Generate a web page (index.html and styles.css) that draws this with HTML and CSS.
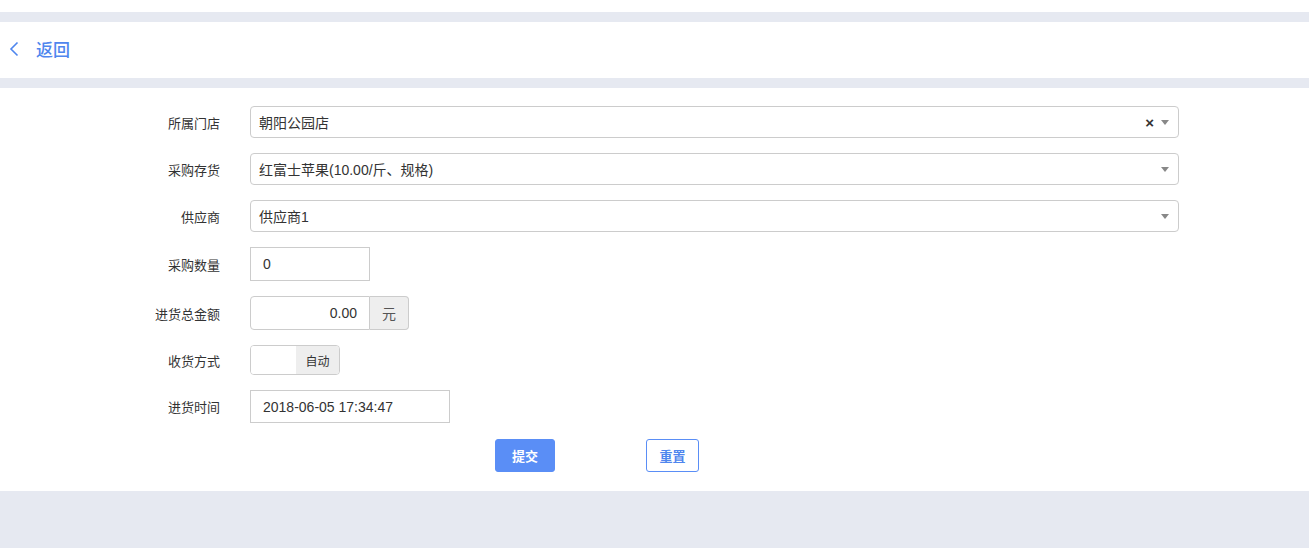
FILE: index.html
```html
<!DOCTYPE html>
<html lang="zh-CN">
<head>
<meta charset="utf-8">
<title>采购</title>
<link rel="stylesheet" href="styles.css">
</head>
<body>
<div class="top-gap"></div>
<div class="band"></div>
<header class="header">
  <a class="back">
    <svg class="chev" width="10" height="16" viewBox="0 0 10 16"><path d="M8.5 1.5 L2 8 L8.5 14.5" fill="none" stroke="#4f86ee" stroke-width="1.6"/></svg>
    <span>返回</span>
  </a>
</header>
<div class="band"></div>
<main class="form">
  <div class="row">
    <label class="lbl">所属门店</label>
    <div class="select wide">
      <span class="val">朝阳公园店</span>
      <span class="clear">×</span>
      <span class="arrow"></span>
    </div>
  </div>
  <div class="row">
    <label class="lbl">采购存货</label>
    <div class="select wide">
      <span class="val">红富士苹果(10.00/斤、规格)</span>
      <span class="arrow"></span>
    </div>
  </div>
  <div class="row">
    <label class="lbl">供应商</label>
    <div class="select wide">
      <span class="val">供应商1</span>
      <span class="arrow"></span>
    </div>
  </div>
  <div class="row">
    <label class="lbl">采购数量</label>
    <div class="input qty">0</div>
  </div>
  <div class="row">
    <label class="lbl">进货总金额</label>
    <div class="group">
      <div class="input money">0.00</div>
      <div class="addon">元</div>
    </div>
  </div>
  <div class="row">
    <label class="lbl">收货方式</label>
    <div class="switch">
      <span class="sw-off"></span>
      <span class="sw-on">自动</span>
    </div>
  </div>
  <div class="row">
    <label class="lbl">进货时间</label>
    <div class="input date">2018-06-05 17:34:47</div>
  </div>
  <div class="actions">
    <button class="btn primary">提交</button>
    <button class="btn ghost">重置</button>
  </div>
</main>
<div class="footer-band"></div>
</body>
</html>
```

FILE: styles.css
```css
html, body {
  margin: 0;
  padding: 0;
  background: #ffffff;
  font-family: "Liberation Sans", "Noto Sans CJK SC", sans-serif;
  color: #333333;
}

.top-gap {
  height: 12px;
  background: #ffffff;
}

.band {
  height: 10px;
  background: #e6e9f1;
}

.header {
  height: 56px;
  display: flex;
  align-items: center;
  background: #ffffff;
}

.back {
  display: flex;
  align-items: center;
  margin-left: 9px;
  margin-top: -4px;
  color: #4f86ee;
  font-size: 17px;
  font-weight: 500;
  cursor: pointer;
}

.chev {
  display: block;
  margin-right: 17px;
  margin-top: 1px;
}

.form {
  padding: 18px 0 5px 0;
  background: #ffffff;
}

.row {
  display: flex;
  align-items: center;
  margin-bottom: 15px;
}

.lbl {
  width: 220px;
  text-align: right;
  font-size: 13px;
  color: #333333;
}

.select {
  height: 32px;
  border: 1px solid #cccccc;
  border-radius: 4px;
  box-sizing: border-box;
  display: flex;
  align-items: center;
  padding: 0 8px;
  font-size: 14px;
  color: #333333;
}

.wide {
  width: 929px;
}

.row .select,
.row .input,
.row .group,
.row .switch {
  margin-left: 30px;
}

.val {
  flex: 1;
}

.clear {
  font-size: 15px;
  font-weight: bold;
  color: #333;
  margin-right: 7px;
  line-height: 1;
}

.arrow {
  width: 0;
  height: 0;
  border-left: 4px solid transparent;
  border-right: 4px solid transparent;
  border-top: 5px solid #888888;
  margin-right: 1px;
}

.input {
  height: 34px;
  border: 1px solid #cccccc;
  box-sizing: border-box;
  display: flex;
  align-items: center;
  padding: 0 12px;
  font-size: 14px;
  color: #333333;
}

.qty {
  width: 120px;
}

.group {
  display: flex;
  height: 34px;
}

.group .input.money {
  margin-left: 0;
  width: 120px;
  height: 34px;
  justify-content: flex-end;
  border-radius: 4px 0 0 4px;
}

.addon {
  width: 39px;
  height: 34px;
  box-sizing: border-box;
  border: 1px solid #cccccc;
  border-left: none;
  border-radius: 0 4px 4px 0;
  background: #eeeeee;
  display: flex;
  align-items: center;
  justify-content: center;
  font-size: 14px;
  color: #555555;
}

.switch {
  display: flex;
  width: 90px;
  height: 30px;
  border: 1px solid #cccccc;
  border-radius: 4px;
  box-sizing: border-box;
  overflow: hidden;
}

.sw-off {
  width: 45px;
  background: #ffffff;
}

.sw-on {
  flex: 1;
  background: #eeeeee;
  display: flex;
  align-items: center;
  justify-content: center;
  font-size: 12px;
  color: #333333;
}

.date {
  width: 200px;
  height: 33px;
}

.actions {
  display: flex;
  align-items: center;
  padding-left: 495px;
  padding-top: 1px;
  padding-bottom: 14px;
}

.btn {
  height: 33px;
  font-family: "Liberation Sans", "Noto Sans CJK SC", sans-serif;
  font-size: 13px;
  font-weight: bold;
  border-radius: 3px;
  box-sizing: border-box;
  cursor: pointer;
}

.primary {
  width: 60px;
  background: #5a8ef6;
  border: 1px solid #5a8ef6;
  color: #ffffff;
}

.ghost {
  width: 53px;
  margin-left: 91px;
  background: #ffffff;
  border: 1px solid #5a8ef6;
  color: #4f86ee;
}

.footer-band {
  height: 57px;
  background: #e6e9f1;
}
```
